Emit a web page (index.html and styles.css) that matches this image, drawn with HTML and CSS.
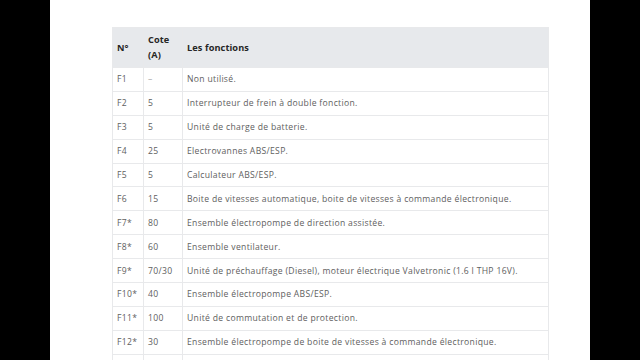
FILE: index.html
```html
<!DOCTYPE html>
<html lang="fr">
<head>
<meta charset="utf-8">
<link rel="stylesheet" href="styles.css">
</head>
<body>
<div class="frame">
  <div class="page">
    <table class="fuses">
      <thead>
        <tr><th class="c-no">N°</th><th class="c-cote">Cote<br>(A)</th><th>Les fonctions</th></tr>
      </thead>
      <tbody>
        <tr><td>F1</td><td class="dash">–</td><td>Non utilisé.</td></tr>
        <tr><td>F2</td><td>5</td><td>Interrupteur de frein à double fonction.</td></tr>
        <tr><td>F3</td><td>5</td><td>Unité de charge de batterie.</td></tr>
        <tr><td>F4</td><td>25</td><td>Electrovannes ABS/ESP.</td></tr>
        <tr><td>F5</td><td>5</td><td>Calculateur ABS/ESP.</td></tr>
        <tr><td>F6</td><td>15</td><td>Boite de vitesses automatique, boite de vitesses à commande électronique.</td></tr>
        <tr><td>F7*</td><td>80</td><td>Ensemble électropompe de direction assistée.</td></tr>
        <tr><td>F8*</td><td>60</td><td>Ensemble ventilateur.</td></tr>
        <tr><td>F9*</td><td>70/30</td><td>Unité de préchauffage (Diesel), moteur électrique Valvetronic (1.6 l THP 16V).</td></tr>
        <tr><td>F10*</td><td>40</td><td>Ensemble électropompe ABS/ESP.</td></tr>
        <tr><td>F11*</td><td>100</td><td>Unité de commutation et de protection.</td></tr>
        <tr><td>F12*</td><td>30</td><td>Ensemble électropompe de boite de vitesses à commande électronique.</td></tr>
        <tr><td></td><td></td><td></td></tr>
      </tbody>
    </table>
  </div>
</div>
</body>
</html>
```
FILE: styles.css
```css
html, body {
  margin: 0;
  padding: 0;
  background: #000;
  height: 360px;
  overflow: hidden;
}
.frame {
  display: flex;
  height: 360px;
}
.page {
  margin-left: 50px;
  width: 540px;
  height: 360px;
  background: #fff;
  padding: 27px 0 0 62px;
  box-sizing: border-box;
  overflow: hidden;
}
.fuses {
  border-collapse: collapse;
  width: 437px;
  font-family: "Open Sans", "Noto Sans", sans-serif;
  color: #5e5e5e;
  font-size: 8.6px;
  letter-spacing: 0.32px;
}
.fuses th, .fuses td {
  border: 1px solid #e8e9eb;
  text-align: left;
  vertical-align: middle;
  padding: 0 4px;
}
.fuses th {
  background: #e7e9ec;
  color: #262626;
  font-weight: 700;
  font-size: 9.2px;
  letter-spacing: 0.1px;
  line-height: 15px;
  height: 40px;
  box-sizing: border-box;
  padding-bottom: 1px;
}
.fuses td {
  height: 23.9px;
  box-sizing: border-box;
  line-height: 12px;
  white-space: nowrap;
}
.c-no { width: 31px; }
.c-cote { width: 39px; }
.dash { color: #aaa; }
```
